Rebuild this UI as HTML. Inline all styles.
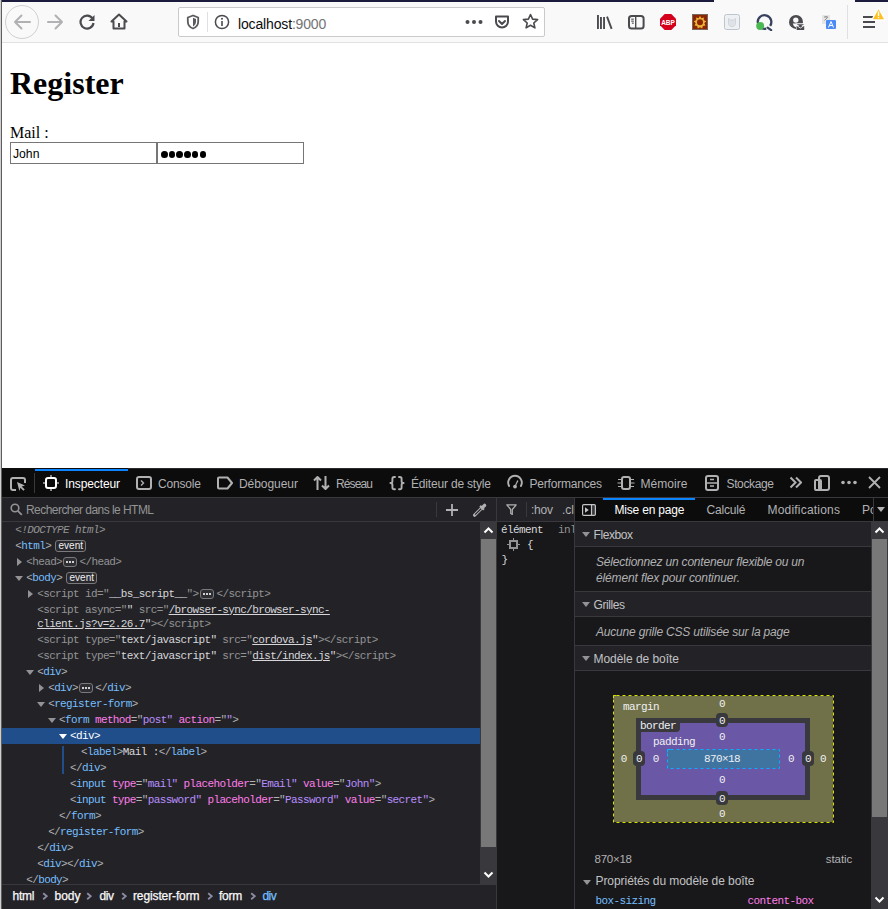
<!DOCTYPE html>
<html><head><meta charset="utf-8"><style>
html,body{margin:0;padding:0}
body{width:888px;height:909px;position:relative;overflow:hidden;background:#fff}
</style></head><body>
<div style="position:absolute;left:0px;top:0px;width:888px;height:43px;background:#f9f9fa;"></div>
<div style="position:absolute;left:0px;top:0px;width:714px;height:2px;background:#1b1c3d;"></div>
<div style="position:absolute;left:855px;top:0px;width:33px;height:2px;background:#1b1c3d;"></div>
<div style="position:absolute;left:0px;top:42px;width:888px;height:1px;background:#e1e1e3;"></div>
<div style="position:absolute;left:0px;top:0px;width:1px;height:909px;background:#cfcfcf;"></div>
<div style="position:absolute;left:1px;top:0px;width:1px;height:909px;background:#5e5e5e;"></div>
<svg style="position:absolute;left:4px;top:4px" width="36" height="36" viewBox="0 0 36 36"><circle cx="18" cy="18" r="16.5" fill="none" stroke="#d0d0d2" stroke-width="1"/><path d="M11 18h15M17.5 11.5L11 18l6.5 6.5" fill="none" stroke="#b1b1b3" stroke-width="2" stroke-linecap="round" stroke-linejoin="round"/></svg>
<svg style="position:absolute;left:46px;top:14px" width="18" height="16" viewBox="0 0 18 16"><path d="M2 8h14M9.5 1.5L16 8l-6.5 6.5" fill="none" stroke="#b1b1b3" stroke-width="2" stroke-linecap="round" stroke-linejoin="round"/></svg>
<svg style="position:absolute;left:79px;top:14px" width="17" height="16" viewBox="0 0 17 16"><path d="M13.5 4.5A6.5 6.5 0 1 0 14.5 9" fill="none" stroke="#4a4a4f" stroke-width="2.2"/><path d="M15.5 1v6h-6z" fill="#4a4a4f"/></svg>
<svg style="position:absolute;left:110px;top:13px" width="18" height="17" viewBox="0 0 18 17"><path d="M9 1.5L1.5 8.5h2v7h11v-7h2z" fill="none" stroke="#4a4a4f" stroke-width="2" stroke-linejoin="round"/><rect x="8" y="10" width="2" height="4" fill="#4a4a4f"/></svg>
<div style="position:absolute;left:178px;top:7px;width:365px;height:28px;background:#fff;border:1px solid #cacacc;border-radius:2px;"></div>
<svg style="position:absolute;left:186px;top:14px" width="14" height="16" viewBox="0 0 14 16"><path d="M7 1.5L1.8 3.5v4c0 3.5 2.3 6 5.2 7 2.9-1 5.2-3.5 5.2-7v-4z" fill="none" stroke="#5b5b5f" stroke-width="1.8"/><path d="M7 3.8v8.6c1.8-.9 3-2.6 3-4.8V5z" fill="#5b5b5f"/></svg>
<div style="position:absolute;left:207px;top:12px;width:1px;height:20px;background:#e0e0e2;"></div>
<svg style="position:absolute;left:214px;top:14px" width="16" height="16" viewBox="0 0 16 16"><circle cx="8" cy="8" r="6.6" fill="none" stroke="#4a4a4f" stroke-width="1.5"/><rect x="7.2" y="7" width="1.6" height="5" fill="#4a4a4f"/><circle cx="8" cy="4.8" r="1" fill="#4a4a4f"/></svg>
<div id="t0" style="letter-spacing:-0.155px;position:absolute;left:238px;top:16.95px;font-family:'Liberation Sans', sans-serif;font-size:14px;line-height:14px;color:#0c0c0d;white-space:pre;">localhost<span style="color:#737373">:9000</span></div>
<svg style="position:absolute;left:465px;top:19px" width="18" height="6" viewBox="0 0 18 6"><circle cx="2.5" cy="3" r="2" fill="#4a4a4f"/><circle cx="9" cy="3" r="2" fill="#4a4a4f"/><circle cx="15.5" cy="3" r="2" fill="#4a4a4f"/></svg>
<svg style="position:absolute;left:494px;top:14px" width="16" height="16" viewBox="0 0 16 16"><path d="M2 2.5h12v5a6 6 0 0 1-12 0z" fill="none" stroke="#4a4a4f" stroke-width="2" stroke-linejoin="round"/><path d="M5 7l3 3 3-3" fill="none" stroke="#4a4a4f" stroke-width="2" stroke-linecap="round" stroke-linejoin="round"/></svg>
<svg style="position:absolute;left:522px;top:13px" width="17" height="17" viewBox="0 0 17 17"><path d="M8.5 1.5l2.1 4.6 5 .5-3.8 3.4 1.1 4.9-4.4-2.6-4.4 2.6 1.1-4.9L1.4 6.6l5-.5z" fill="none" stroke="#4a4a4f" stroke-width="1.6" stroke-linejoin="round"/></svg>
<svg style="position:absolute;left:596px;top:14px" width="17" height="16" viewBox="0 0 17 16"><rect x="1" y="1" width="1.9" height="14" fill="#4a4a4f"/><rect x="4" y="3" width="1.9" height="12" fill="#4a4a4f"/><rect x="7.1" y="3" width="1.9" height="12" fill="#4a4a4f"/><path d="M11 2.6l4.6 12.2" stroke="#4a4a4f" stroke-width="1.9"/></svg>
<svg style="position:absolute;left:628px;top:14.5px" width="17" height="15" viewBox="0 0 17 15"><rect x="1" y="1" width="14.6" height="12.6" rx="2.6" fill="none" stroke="#4a4a4f" stroke-width="2"/><rect x="7" y="1" width="1.4" height="12.6" fill="#4a4a4f"/><rect x="3.2" y="3.6" width="2.6" height="1.1" fill="#4a4a4f"/><rect x="3.2" y="5.6" width="2.6" height="1.1" fill="#4a4a4f"/><rect x="3.9" y="7.6" width="1.9" height="1.1" fill="#4a4a4f"/></svg>
<svg style="position:absolute;left:660px;top:14px" width="16" height="16" viewBox="0 0 16 16"><path d="M4.7 0h6.6L16 4.7v6.6L11.3 16H4.7L0 11.3V4.7z" fill="#d4001c"/><text x="8" y="11" font-family="Liberation Sans" font-weight="bold" font-size="6.5" fill="#fff" text-anchor="middle">ABP</text></svg>
<svg style="position:absolute;left:692px;top:14px" width="16" height="16" viewBox="0 0 16 16"><rect x="0.5" y="0.5" width="15" height="15" fill="#8c2500" stroke="#77685f"/><path d="M8 1.8l1.3 2.4 2.6-.8-.2 2.7 2.5 1.1-1.9 2 1.2 2.4-2.7.4-.6 2.6L8 13.3l-2.2 1.3-.6-2.6-2.7-.4 1.2-2.4-1.9-2 2.5-1.1-.2-2.7 2.6.8z" fill="#e9b43a"/><circle cx="8" cy="8.2" r="3" fill="#8c2500"/></svg>
<svg style="position:absolute;left:724px;top:14px" width="16" height="16" viewBox="0 0 16 16"><rect x="0.5" y="0.5" width="15" height="15" rx="2" fill="#eef0f3" stroke="#bcc4cc"/><path d="M4.5 4.5l2 1.5h3l2-1.5v5c0 2-1.8 3.2-3.5 3.2S4.5 11.5 4.5 9.5z" fill="#dfe3e7" stroke="#c9cfd5" stroke-width="0.8"/></svg>
<svg style="position:absolute;left:755px;top:13px" width="19" height="18" viewBox="0 0 19 18"><path d="M11.2 15.6A6.8 6.8 0 1 1 15.1 12.9" fill="none" stroke="#38425f" stroke-width="2.3"/><path d="M12.6 14.6l3.6 2.6" stroke="#38425f" stroke-width="2.2" stroke-linecap="round"/><circle cx="5.2" cy="12.9" r="4" fill="#4cb853"/></svg>
<svg style="position:absolute;left:788px;top:14px" width="17" height="17" viewBox="0 0 17 17"><circle cx="8" cy="7.9" r="7" fill="#4a4a4f"/><circle cx="7.8" cy="6.1" r="2.7" fill="#f9f9fa"/><path d="M4.8 9.2Q6.2 9.7 8 9.2H17V17H8V13.2Q5.4 12.8 4.8 9.2z" fill="#f9f9fa"/><path d="M8.6 10.2H16.2L12.4 12.6z" fill="#4a4a4f"/><rect x="8.6" y="12" width="7.6" height="4" fill="#4a4a4f"/><path d="M8.8 11.6L12.4 14 16 11.6" fill="none" stroke="#f9f9fa" stroke-width="0.9"/></svg>
<svg style="position:absolute;left:821px;top:15px" width="15" height="14" viewBox="0 0 15 14"><rect x="1" y="0" width="8" height="9" fill="#e6e6e6"/><path d="M3 2h4M5 1v1M3.5 5.5l3-3" stroke="#777" stroke-width="0.8"/><rect x="5" y="5" width="10" height="9" rx="1" fill="#4c8bf5"/><path d="M7.5 12.5l2.5-6 2.5 6M8.5 10.5h3" fill="none" stroke="#fff" stroke-width="1"/></svg>
<div style="position:absolute;left:847px;top:5px;width:1px;height:34px;background:#e0e0e2;"></div>
<svg style="position:absolute;left:862px;top:15px" width="14" height="13" viewBox="0 0 14 13"><rect x="1" y="1" width="12" height="2" fill="#4a4a4f"/><rect x="1" y="6" width="12" height="2" fill="#4a4a4f"/><rect x="1" y="11" width="12" height="2" fill="#4a4a4f"/></svg>
<svg style="position:absolute;left:871px;top:7px" width="15" height="14" viewBox="0 0 15 14"><path d="M7.5 0.8L14.2 13H0.8z" fill="#ffbf1f" stroke="#fff" stroke-linejoin="round" stroke-width="1.4"/><rect x="6.8" y="4.5" width="1.4" height="4.5" fill="#fff"/><rect x="6.8" y="9.8" width="1.4" height="1.4" fill="#fff"/></svg>
<div id="t1" style="position:absolute;left:10px;top:67.20px;font-family:'Liberation Serif', serif;font-size:32px;line-height:32px;color:#000;white-space:pre;font-weight:bold;">Register</div>
<div id="t2" style="position:absolute;left:10px;top:124.60px;font-family:'Liberation Serif', serif;font-size:16px;line-height:16px;color:#000;white-space:pre;">Mail :</div>
<div style="position:absolute;left:10px;top:142px;width:145px;height:20px;background:#fff;border:1px solid #767676;"></div>
<div id="t3" style="position:absolute;left:13px;top:147.67px;font-family:'Liberation Sans', sans-serif;font-size:12.2px;line-height:12.2px;color:#000;white-space:pre;">John</div>
<div style="position:absolute;left:157px;top:142px;width:145px;height:20px;background:#fff;border:1px solid #767676;"></div>
<div style="position:absolute;left:161.0px;top:150.5px;width:6.6px;height:7px;border-radius:50%;background:#000"></div>
<div style="position:absolute;left:168.7px;top:150.5px;width:6.6px;height:7px;border-radius:50%;background:#000"></div>
<div style="position:absolute;left:176.4px;top:150.5px;width:6.6px;height:7px;border-radius:50%;background:#000"></div>
<div style="position:absolute;left:184.1px;top:150.5px;width:6.6px;height:7px;border-radius:50%;background:#000"></div>
<div style="position:absolute;left:191.8px;top:150.5px;width:6.6px;height:7px;border-radius:50%;background:#000"></div>
<div style="position:absolute;left:199.5px;top:150.5px;width:6.6px;height:7px;border-radius:50%;background:#000"></div>
<div style="position:absolute;left:2px;top:468px;width:886px;height:441px;background:#232327;"></div>
<div style="position:absolute;left:2px;top:468px;width:886px;height:29px;background:#0c0c0d;"></div>
<div style="position:absolute;left:2px;top:497px;width:886px;height:1px;background:#38383d;"></div>
<div style="position:absolute;left:128px;top:468px;width:760px;height:1px;background:#2a2a2e;"></div>
<div style="position:absolute;left:35px;top:469px;width:93px;height:2px;background:#0a84ff;"></div>
<svg style="position:absolute;left:10px;top:477px" width="17" height="15" viewBox="0 0 17 15"><path d="M6 13H3a2 2 0 0 1-2-2V3a2 2 0 0 1 2-2h10a2 2 0 0 1 2 2v3" fill="none" stroke="#b1b1b3" stroke-width="2"/><path d="M7 5l8 3.5-3.3 1 3 3-1.3 1.3-3-3-1 3.2z" fill="#b1b1b3"/></svg>
<div style="position:absolute;left:34px;top:473px;width:1px;height:20px;background:#38383d;"></div>
<svg style="position:absolute;left:43px;top:475px" width="16" height="16" viewBox="0 0 16 16"><rect x="3" y="3" width="10" height="10" rx="2" fill="none" stroke="#fff" stroke-width="2"/><path d="M8 0v3M8 13v3M0 8h3M13 8h3" stroke="#fff" stroke-width="1"/></svg>
<div id="t4" style="letter-spacing:-0.116px;position:absolute;left:65px;top:477.84px;font-family:'Liberation Sans', sans-serif;font-size:12px;line-height:12px;color:#fff;white-space:pre;">Inspecteur</div>
<svg style="position:absolute;left:136px;top:476px" width="16" height="14" viewBox="0 0 16 14"><rect x="1" y="1" width="14" height="12" rx="2" fill="none" stroke="#b1b1b3" stroke-width="2"/><path d="M5 4.5l2.5 2.5L5 9.5" fill="none" stroke="#b1b1b3" stroke-width="1.4"/></svg>
<div id="t5" style="letter-spacing:-0.172px;position:absolute;left:158px;top:477.84px;font-family:'Liberation Sans', sans-serif;font-size:12px;line-height:12px;color:#b1b1b3;white-space:pre;">Console</div>
<svg style="position:absolute;left:217px;top:476px" width="16" height="14" viewBox="0 0 16 14"><path d="M2 1.5h8.5L15 7l-4.5 5.5H2a1 1 0 0 1-1-1v-9a1 1 0 0 1 1-1z" fill="none" stroke="#b1b1b3" stroke-width="2" stroke-linejoin="round"/></svg>
<div id="t6" style="letter-spacing:-0.049px;position:absolute;left:239px;top:477.84px;font-family:'Liberation Sans', sans-serif;font-size:12px;line-height:12px;color:#b1b1b3;white-space:pre;">Débogueur</div>
<svg style="position:absolute;left:313px;top:475px" width="17" height="16" viewBox="0 0 17 16"><path d="M4.5 15V2M1 5.5l3.5-3.5L8 5.5M12.5 1v13M9 10.5l3.5 3.5 3.5-3.5" fill="none" stroke="#b1b1b3" stroke-width="2" stroke-linejoin="round"/></svg>
<div id="t7" style="letter-spacing:-0.875px;position:absolute;left:336px;top:477.84px;font-family:'Liberation Sans', sans-serif;font-size:12px;line-height:12px;color:#b1b1b3;white-space:pre;">Réseau</div>
<svg style="position:absolute;left:389px;top:475px" width="16" height="16" viewBox="0 0 16 16"><path d="M6 2H5.2Q3.4 2 3.4 3.8V6.2Q3.4 8 1.4 8Q3.4 8 3.4 9.8V12.4Q3.4 14.2 5.2 14.2H6M10 2H10.8Q12.6 2 12.6 3.8V6.2Q12.6 8 14.6 8Q12.6 8 12.6 9.8V12.4Q12.6 14.2 10.8 14.2H10" fill="none" stroke="#b1b1b3" stroke-width="1.9" stroke-linecap="round" stroke-linejoin="round"/></svg>
<div id="t8" style="letter-spacing:-0.181px;position:absolute;left:411px;top:477.84px;font-family:'Liberation Sans', sans-serif;font-size:12px;line-height:12px;color:#b1b1b3;white-space:pre;">Éditeur de style</div>
<svg style="position:absolute;left:507px;top:474px" width="16" height="16" viewBox="0 0 16 16"><path d="M2.1 12A6.8 6.8 0 1 1 13.9 12" fill="none" stroke="#b1b1b3" stroke-width="1.9" stroke-linecap="round"/><path d="M8 12.4L10.6 6.9" stroke="#b1b1b3" stroke-width="1.2" stroke-linecap="round"/><circle cx="8" cy="12.6" r="1.9" fill="#b1b1b3"/></svg>
<div id="t9" style="letter-spacing:-0.200px;position:absolute;left:529.5px;top:477.84px;font-family:'Liberation Sans', sans-serif;font-size:12px;line-height:12px;color:#b1b1b3;white-space:pre;">Performances</div>
<svg style="position:absolute;left:617px;top:475px" width="18" height="16" viewBox="0 0 18 16"><rect x="5" y="2" width="8" height="12" rx="2" fill="none" stroke="#b1b1b3" stroke-width="2"/><path d="M1 4.5h3.5M0.5 8h4M1 11.5h3.5M13.5 4.5h3.5M13.5 8h4M13.5 11.5h3.5" stroke="#b1b1b3" stroke-width="1.2"/></svg>
<div id="t10" style="letter-spacing:0.052px;position:absolute;left:640.5px;top:477.84px;font-family:'Liberation Sans', sans-serif;font-size:12px;line-height:12px;color:#b1b1b3;white-space:pre;">Mémoire</div>
<svg style="position:absolute;left:705px;top:475px" width="14" height="16" viewBox="0 0 14 16"><rect x="1" y="1" width="12" height="14" rx="2" fill="none" stroke="#b1b1b3" stroke-width="2"/><path d="M1 8h12M5 4.5h4M5 11h4" stroke="#b1b1b3" stroke-width="1.5"/></svg>
<div id="t11" style="letter-spacing:-0.364px;position:absolute;left:726.5px;top:477.84px;font-family:'Liberation Sans', sans-serif;font-size:12px;line-height:12px;color:#b1b1b3;white-space:pre;">Stockage</div>
<svg style="position:absolute;left:789px;top:476px" width="13" height="13" viewBox="0 0 13 13"><path d="M1.5 1.5l5 5-5 5M7 1.5l5 5-5 5" fill="none" stroke="#b1b1b3" stroke-width="2"/></svg>
<svg style="position:absolute;left:814px;top:475px" width="16" height="16" viewBox="0 0 16 16"><rect x="5" y="1" width="10" height="14" rx="2" fill="none" stroke="#b1b1b3" stroke-width="2"/><rect x="1" y="5" width="6" height="10" rx="1" fill="none" stroke="#b1b1b3" stroke-width="2"/></svg>
<svg style="position:absolute;left:841px;top:480px" width="16" height="5" viewBox="0 0 16 5"><circle cx="2" cy="2.5" r="1.8" fill="#b1b1b3"/><circle cx="8" cy="2.5" r="1.8" fill="#b1b1b3"/><circle cx="14" cy="2.5" r="1.8" fill="#b1b1b3"/></svg>
<svg style="position:absolute;left:868px;top:476px" width="13" height="13" viewBox="0 0 13 13"><path d="M1 1l11 11M12 1L1 12" stroke="#b1b1b3" stroke-width="1.8"/></svg>
<div style="position:absolute;left:2px;top:498px;width:494px;height:23px;background:#232327;"></div>
<div style="position:absolute;left:2px;top:521px;width:494px;height:1px;background:#38383d;"></div>
<svg style="position:absolute;left:10px;top:503px" width="13" height="13" viewBox="0 0 13 13"><circle cx="5" cy="5" r="3.8" fill="none" stroke="#939395" stroke-width="1.6"/><path d="M7.8 7.8l4 4" stroke="#939395" stroke-width="1.8"/></svg>
<div id="t12" style="letter-spacing:-0.548px;position:absolute;left:26px;top:503.84px;font-family:'Liberation Sans', sans-serif;font-size:12px;line-height:12px;color:#939395;white-space:pre;">Rechercher dans le HTML</div>
<div style="position:absolute;left:436px;top:502px;width:1px;height:15px;background:#38383d;"></div>
<svg style="position:absolute;left:446px;top:504px" width="12" height="12" viewBox="0 0 12 12"><path d="M6 0v12M0 6h12" stroke="#b1b1b3" stroke-width="1.8"/></svg>
<svg style="position:absolute;left:472px;top:501px" width="16" height="16" viewBox="0 0 16 16"><path d="M2.6 14.2L9.6 7.2" stroke="#b1b1b3" stroke-width="3.2" stroke-linecap="round"/><path d="M3.1 13.7L9.3 7.5" stroke="#232327" stroke-width="1.1"/><path d="M8.1 4.9L11.9 8.7" stroke="#b1b1b3" stroke-width="2.2"/><path d="M10.6 6.4l2-2" stroke="#b1b1b3" stroke-width="3.4" stroke-linecap="round"/></svg>
<div style="position:absolute;left:480px;top:522px;width:16px;height:362px;background:#38383d;"></div>
<div style="position:absolute;left:481px;top:539px;width:15px;height:308px;background:#787878;"></div>
<svg style="position:absolute;left:483px;top:526px" width="11" height="8" viewBox="0 0 11 8"><path d="M1.5 6.5l4-4 4 4" fill="none" stroke="#fff" stroke-width="2"/></svg>
<svg style="position:absolute;left:483px;top:871px" width="11" height="8" viewBox="0 0 11 8"><path d="M1.5 1.5l4 4 4-4" fill="none" stroke="#fff" stroke-width="2"/></svg>
<div style="position:absolute;left:2px;top:884px;width:494px;height:1px;background:#38383d;"></div>
<div style="position:absolute;left:2px;top:885px;width:494px;height:24px;background:#232327;"></div>
<div id="t13" style="letter-spacing:-0.224px;position:absolute;left:12.5px;top:889.84px;font-family:'Liberation Sans', sans-serif;font-size:12px;line-height:12px;color:#f9f9fa;white-space:pre;-webkit-text-stroke:0.25px currentColor;">html</div>
<svg style="position:absolute;left:41.5px;top:891.5px" width="6" height="9" viewBox="0 0 6 9"><path d="M1.2 1.2l3.6 3-3.6 3" fill="none" stroke="#8d8ca6" stroke-width="1.8"/></svg>
<div id="t14" style="letter-spacing:-0.010px;position:absolute;left:54.5px;top:889.84px;font-family:'Liberation Sans', sans-serif;font-size:12px;line-height:12px;color:#f9f9fa;white-space:pre;-webkit-text-stroke:0.25px currentColor;">body</div>
<svg style="position:absolute;left:86px;top:891.5px" width="6" height="9" viewBox="0 0 6 9"><path d="M1.2 1.2l3.6 3-3.6 3" fill="none" stroke="#8d8ca6" stroke-width="1.8"/></svg>
<div id="t15" style="letter-spacing:-0.422px;position:absolute;left:99.5px;top:889.84px;font-family:'Liberation Sans', sans-serif;font-size:12px;line-height:12px;color:#f9f9fa;white-space:pre;-webkit-text-stroke:0.25px currentColor;">div</div>
<svg style="position:absolute;left:120.5px;top:891.5px" width="6" height="9" viewBox="0 0 6 9"><path d="M1.2 1.2l3.6 3-3.6 3" fill="none" stroke="#8d8ca6" stroke-width="1.8"/></svg>
<div id="t16" style="letter-spacing:-0.126px;position:absolute;left:133px;top:889.84px;font-family:'Liberation Sans', sans-serif;font-size:12px;line-height:12px;color:#f9f9fa;white-space:pre;-webkit-text-stroke:0.25px currentColor;">register-form</div>
<svg style="position:absolute;left:206.5px;top:891.5px" width="6" height="9" viewBox="0 0 6 9"><path d="M1.2 1.2l3.6 3-3.6 3" fill="none" stroke="#8d8ca6" stroke-width="1.8"/></svg>
<div id="t17" style="letter-spacing:-0.233px;position:absolute;left:219px;top:889.84px;font-family:'Liberation Sans', sans-serif;font-size:12px;line-height:12px;color:#f9f9fa;white-space:pre;-webkit-text-stroke:0.25px currentColor;">form</div>
<svg style="position:absolute;left:249.5px;top:891.5px" width="6" height="9" viewBox="0 0 6 9"><path d="M1.2 1.2l3.6 3-3.6 3" fill="none" stroke="#8d8ca6" stroke-width="1.8"/></svg>
<div id="t18" style="letter-spacing:-0.572px;position:absolute;left:262.5px;top:889.84px;font-family:'Liberation Sans', sans-serif;font-size:12px;line-height:12px;color:#75bfff;white-space:pre;-webkit-text-stroke:0.25px currentColor;">div</div>
<div style="position:absolute;left:2px;top:728px;width:478px;height:16px;background:#204e8a;"></div>
<div id="t19" style="position:absolute;left:15.3px;top:524.57px;font-family:'Liberation Mono', monospace;font-size:11px;line-height:11px;color:#b1b1b3;white-space:pre;letter-spacing:-0.63px;font-style:italic;"><span style="color:#939395;">&lt;!DOCTYPE html&gt;</span></div>
<div id="t20" style="position:absolute;left:15.3px;top:540.57px;font-family:'Liberation Mono', monospace;font-size:11px;line-height:11px;color:#b1b1b3;white-space:pre;letter-spacing:-0.63px;"><span style="color:#b1b1b3;">&lt;</span><span style="color:#75bfff;">html</span><span style="color:#b1b1b3;">&gt;</span></div>
<div style="position:absolute;left:55px;top:540px;width:29px;height:10px;border:1px solid #7a7a7c;border-radius:3px;background:#2a2a2e"></div>
<div id="t21" style="letter-spacing:0.008px;position:absolute;left:58.5px;top:540.53px;font-family:'Liberation Sans', sans-serif;font-size:10px;line-height:10px;color:#f0f0f2;white-space:pre;">event</div>
<svg style="position:absolute;left:16.75px;top:558px" width="5" height="8" viewBox="0 0 5 8"><path d="M0 0v8l5-4z" fill="#939395"/></svg>
<div id="t22" style="position:absolute;left:26.25px;top:556.57px;font-family:'Liberation Mono', monospace;font-size:11px;line-height:11px;color:#b1b1b3;white-space:pre;letter-spacing:-0.63px;"><span style="color:#939395;">&lt;head&gt;</span></div>
<svg style="position:absolute;left:63px;top:557px" width="14" height="10" viewBox="0 0 14 10"><rect x="0.5" y="0.5" width="13" height="9" rx="2.5" fill="#2e2e33" stroke="#7a7a7c"/><rect x="3" y="4" width="2" height="2" fill="#d0d0d2"/><rect x="6" y="4" width="2" height="2" fill="#d0d0d2"/><rect x="9" y="4" width="2" height="2" fill="#d0d0d2"/></svg>
<div id="t23" style="position:absolute;left:79.5px;top:556.57px;font-family:'Liberation Mono', monospace;font-size:11px;line-height:11px;color:#939395;white-space:pre;letter-spacing:-0.63px;"><span style="color:#939395;">&lt;/head&gt;</span></div>
<svg style="position:absolute;left:15.25px;top:575.5px" width="8" height="5" viewBox="0 0 8 5"><path d="M0 0h8L4 5z" fill="#939395"/></svg>
<div id="t24" style="position:absolute;left:26.25px;top:572.57px;font-family:'Liberation Mono', monospace;font-size:11px;line-height:11px;color:#b1b1b3;white-space:pre;letter-spacing:-0.63px;"><span style="color:#b1b1b3;">&lt;</span><span style="color:#75bfff;">body</span><span style="color:#b1b1b3;">&gt;</span></div>
<div style="position:absolute;left:66px;top:572px;width:29px;height:10px;border:1px solid #7a7a7c;border-radius:3px;background:#2a2a2e"></div>
<div id="t25" style="letter-spacing:0.008px;position:absolute;left:69.5px;top:572.53px;font-family:'Liberation Sans', sans-serif;font-size:10px;line-height:10px;color:#f0f0f2;white-space:pre;">event</div>
<svg style="position:absolute;left:27.700000000000003px;top:590px" width="5" height="8" viewBox="0 0 5 8"><path d="M0 0v8l5-4z" fill="#939395"/></svg>
<div id="t26" style="position:absolute;left:37.2px;top:588.57px;font-family:'Liberation Mono', monospace;font-size:11px;line-height:11px;color:#b1b1b3;white-space:pre;letter-spacing:-0.63px;"><span style="color:#939395;">&lt;script </span><span style="color:#939395;">id</span><span style="color:#939395;">=&quot;</span><span style="color:#d7d7db;">__bs_script__</span><span style="color:#939395;">&quot;&gt;</span></div>
<svg style="position:absolute;left:200px;top:589px" width="14" height="10" viewBox="0 0 14 10"><rect x="0.5" y="0.5" width="13" height="9" rx="2.5" fill="#2e2e33" stroke="#7a7a7c"/><rect x="3" y="4" width="2" height="2" fill="#d0d0d2"/><rect x="6" y="4" width="2" height="2" fill="#d0d0d2"/><rect x="9" y="4" width="2" height="2" fill="#d0d0d2"/></svg>
<div id="t27" style="position:absolute;left:216.5px;top:588.57px;font-family:'Liberation Mono', monospace;font-size:11px;line-height:11px;color:#939395;white-space:pre;letter-spacing:-0.63px;"><span style="color:#939395;">&lt;/script&gt;</span></div>
<div id="t28" style="position:absolute;left:37.2px;top:604.57px;font-family:'Liberation Mono', monospace;font-size:11px;line-height:11px;color:#b1b1b3;white-space:pre;letter-spacing:-0.63px;"><span style="color:#939395;">&lt;script </span><span style="color:#939395;">async</span><span style="color:#939395;">=&quot;</span><span style="color:#d7d7db;">&quot;</span><span style="color:#939395;"> </span><span style="color:#939395;">src</span><span style="color:#939395;">=&quot;</span><span style="color:#d7d7db;text-decoration:underline;">/browser-sync/browser-sync-</span></div>
<div id="t29" style="position:absolute;left:37.2px;top:618.57px;font-family:'Liberation Mono', monospace;font-size:11px;line-height:11px;color:#b1b1b3;white-space:pre;letter-spacing:-0.63px;"><span style="color:#d7d7db;text-decoration:underline;">client.js?v=2.26.7</span><span style="color:#d7d7db;">&quot;</span><span style="color:#939395;">&gt;&lt;/script&gt;</span></div>
<div id="t30" style="position:absolute;left:37.2px;top:634.57px;font-family:'Liberation Mono', monospace;font-size:11px;line-height:11px;color:#b1b1b3;white-space:pre;letter-spacing:-0.63px;"><span style="color:#939395;">&lt;script </span><span style="color:#939395;">type</span><span style="color:#939395;">=&quot;</span><span style="color:#d7d7db;">text/javascript&quot;</span><span style="color:#939395;"> </span><span style="color:#939395;">src</span><span style="color:#939395;">=&quot;</span><span style="color:#d7d7db;text-decoration:underline;">cordova.js</span><span style="color:#d7d7db;">&quot;</span><span style="color:#939395;">&gt;&lt;/script&gt;</span></div>
<div id="t31" style="position:absolute;left:37.2px;top:650.57px;font-family:'Liberation Mono', monospace;font-size:11px;line-height:11px;color:#b1b1b3;white-space:pre;letter-spacing:-0.63px;"><span style="color:#939395;">&lt;script </span><span style="color:#939395;">type</span><span style="color:#939395;">=&quot;</span><span style="color:#d7d7db;">text/javascript&quot;</span><span style="color:#939395;"> </span><span style="color:#939395;">src</span><span style="color:#939395;">=&quot;</span><span style="color:#d7d7db;text-decoration:underline;">dist/index.js</span><span style="color:#d7d7db;">&quot;</span><span style="color:#939395;">&gt;&lt;/script&gt;</span></div>
<svg style="position:absolute;left:26.200000000000003px;top:669.5px" width="8" height="5" viewBox="0 0 8 5"><path d="M0 0h8L4 5z" fill="#939395"/></svg>
<div id="t32" style="position:absolute;left:37.2px;top:666.57px;font-family:'Liberation Mono', monospace;font-size:11px;line-height:11px;color:#b1b1b3;white-space:pre;letter-spacing:-0.63px;"><span style="color:#b1b1b3;">&lt;</span><span style="color:#75bfff;">div</span><span style="color:#b1b1b3;">&gt;</span></div>
<svg style="position:absolute;left:38.64999999999999px;top:684px" width="5" height="8" viewBox="0 0 5 8"><path d="M0 0v8l5-4z" fill="#939395"/></svg>
<div id="t33" style="position:absolute;left:48.14999999999999px;top:682.57px;font-family:'Liberation Mono', monospace;font-size:11px;line-height:11px;color:#b1b1b3;white-space:pre;letter-spacing:-0.63px;"><span style="color:#b1b1b3;">&lt;</span><span style="color:#75bfff;">div</span><span style="color:#b1b1b3;">&gt;</span></div>
<svg style="position:absolute;left:79px;top:683px" width="14" height="10" viewBox="0 0 14 10"><rect x="0.5" y="0.5" width="13" height="9" rx="2.5" fill="#2e2e33" stroke="#7a7a7c"/><rect x="3" y="4" width="2" height="2" fill="#d0d0d2"/><rect x="6" y="4" width="2" height="2" fill="#d0d0d2"/><rect x="9" y="4" width="2" height="2" fill="#d0d0d2"/></svg>
<div id="t34" style="position:absolute;left:95.2px;top:682.57px;font-family:'Liberation Mono', monospace;font-size:11px;line-height:11px;color:#b1b1b3;white-space:pre;letter-spacing:-0.63px;"><span style="color:#b1b1b3;">&lt;/</span><span style="color:#75bfff;">div</span><span style="color:#b1b1b3;">&gt;</span></div>
<svg style="position:absolute;left:37.14999999999999px;top:701.5px" width="8" height="5" viewBox="0 0 8 5"><path d="M0 0h8L4 5z" fill="#939395"/></svg>
<div id="t35" style="position:absolute;left:48.14999999999999px;top:698.57px;font-family:'Liberation Mono', monospace;font-size:11px;line-height:11px;color:#b1b1b3;white-space:pre;letter-spacing:-0.63px;"><span style="color:#b1b1b3;">&lt;</span><span style="color:#75bfff;">register-form</span><span style="color:#b1b1b3;">&gt;</span></div>
<svg style="position:absolute;left:48.099999999999994px;top:717.5px" width="8" height="5" viewBox="0 0 8 5"><path d="M0 0h8L4 5z" fill="#939395"/></svg>
<div id="t36" style="position:absolute;left:59.099999999999994px;top:714.57px;font-family:'Liberation Mono', monospace;font-size:11px;line-height:11px;color:#b1b1b3;white-space:pre;letter-spacing:-0.63px;"><span style="color:#b1b1b3;">&lt;</span><span style="color:#75bfff;">form</span><span style="color:#b1b1b3;"> </span><span style="color:#ff7de9;">method</span><span style="color:#b1b1b3;">=&quot;</span><span style="color:#b98eff;">post&quot;</span><span style="color:#b1b1b3;"> </span><span style="color:#ff7de9;">action</span><span style="color:#b1b1b3;">=&quot;</span><span style="color:#b98eff;">&quot;</span><span style="color:#b1b1b3;">&gt;</span></div>
<svg style="position:absolute;left:59.05px;top:733.5px" width="8" height="5" viewBox="0 0 8 5"><path d="M0 0h8L4 5z" fill="#fff"/></svg>
<div id="t37" style="position:absolute;left:70.05px;top:730.57px;font-family:'Liberation Mono', monospace;font-size:11px;line-height:11px;color:#b1b1b3;white-space:pre;letter-spacing:-0.63px;"><span style="color:#fff;">&lt;div&gt;</span></div>
<div style="position:absolute;left:62px;top:746px;width:2px;height:28px;background:#204e8a;"></div>
<div id="t38" style="position:absolute;left:80.99999999999999px;top:746.57px;font-family:'Liberation Mono', monospace;font-size:11px;line-height:11px;color:#b1b1b3;white-space:pre;letter-spacing:-0.63px;"><span style="color:#b1b1b3;">&lt;</span><span style="color:#75bfff;">label</span><span style="color:#b1b1b3;">&gt;</span><span style="color:#d7d7db;">Mail :</span><span style="color:#b1b1b3;">&lt;/</span><span style="color:#75bfff;">label</span><span style="color:#b1b1b3;">&gt;</span></div>
<div id="t39" style="position:absolute;left:70.05px;top:762.57px;font-family:'Liberation Mono', monospace;font-size:11px;line-height:11px;color:#b1b1b3;white-space:pre;letter-spacing:-0.63px;"><span style="color:#b1b1b3;">&lt;/</span><span style="color:#75bfff;">div</span><span style="color:#b1b1b3;">&gt;</span></div>
<div id="t40" style="position:absolute;left:70.05px;top:778.57px;font-family:'Liberation Mono', monospace;font-size:11px;line-height:11px;color:#b1b1b3;white-space:pre;letter-spacing:-0.63px;"><span style="color:#b1b1b3;">&lt;</span><span style="color:#75bfff;">input</span><span style="color:#b1b1b3;"> </span><span style="color:#ff7de9;">type</span><span style="color:#b1b1b3;">=&quot;</span><span style="color:#b98eff;">mail&quot;</span><span style="color:#b1b1b3;"> </span><span style="color:#ff7de9;">placeholder</span><span style="color:#b1b1b3;">=&quot;</span><span style="color:#b98eff;">Email&quot;</span><span style="color:#b1b1b3;"> </span><span style="color:#ff7de9;">value</span><span style="color:#b1b1b3;">=&quot;</span><span style="color:#b98eff;">John&quot;</span><span style="color:#b1b1b3;">&gt;</span></div>
<div id="t41" style="position:absolute;left:70.05px;top:794.57px;font-family:'Liberation Mono', monospace;font-size:11px;line-height:11px;color:#b1b1b3;white-space:pre;letter-spacing:-0.63px;"><span style="color:#b1b1b3;">&lt;</span><span style="color:#75bfff;">input</span><span style="color:#b1b1b3;"> </span><span style="color:#ff7de9;">type</span><span style="color:#b1b1b3;">=&quot;</span><span style="color:#b98eff;">password&quot;</span><span style="color:#b1b1b3;"> </span><span style="color:#ff7de9;">placeholder</span><span style="color:#b1b1b3;">=&quot;</span><span style="color:#b98eff;">Password&quot;</span><span style="color:#b1b1b3;"> </span><span style="color:#ff7de9;">value</span><span style="color:#b1b1b3;">=&quot;</span><span style="color:#b98eff;">secret&quot;</span><span style="color:#b1b1b3;">&gt;</span></div>
<div id="t42" style="position:absolute;left:59.099999999999994px;top:810.57px;font-family:'Liberation Mono', monospace;font-size:11px;line-height:11px;color:#b1b1b3;white-space:pre;letter-spacing:-0.63px;"><span style="color:#b1b1b3;">&lt;/</span><span style="color:#75bfff;">form</span><span style="color:#b1b1b3;">&gt;</span></div>
<div id="t43" style="position:absolute;left:48.14999999999999px;top:826.57px;font-family:'Liberation Mono', monospace;font-size:11px;line-height:11px;color:#b1b1b3;white-space:pre;letter-spacing:-0.63px;"><span style="color:#b1b1b3;">&lt;/</span><span style="color:#75bfff;">register-form</span><span style="color:#b1b1b3;">&gt;</span></div>
<div id="t44" style="position:absolute;left:37.2px;top:842.57px;font-family:'Liberation Mono', monospace;font-size:11px;line-height:11px;color:#b1b1b3;white-space:pre;letter-spacing:-0.63px;"><span style="color:#b1b1b3;">&lt;/</span><span style="color:#75bfff;">div</span><span style="color:#b1b1b3;">&gt;</span></div>
<div id="t45" style="position:absolute;left:37.2px;top:858.57px;font-family:'Liberation Mono', monospace;font-size:11px;line-height:11px;color:#b1b1b3;white-space:pre;letter-spacing:-0.63px;"><span style="color:#b1b1b3;">&lt;</span><span style="color:#75bfff;">div</span><span style="color:#b1b1b3;">&gt;&lt;/</span><span style="color:#75bfff;">div</span><span style="color:#b1b1b3;">&gt;</span></div>
<div id="t46" style="position:absolute;left:26.25px;top:874.57px;font-family:'Liberation Mono', monospace;font-size:11px;line-height:11px;color:#b1b1b3;white-space:pre;letter-spacing:-0.63px;"><span style="color:#b1b1b3;">&lt;/</span><span style="color:#75bfff;">body</span><span style="color:#b1b1b3;">&gt;</span></div>
<div style="position:absolute;left:496px;top:497px;width:1px;height:412px;background:#38383d;"></div>
<div style="position:absolute;left:497px;top:498px;width:77px;height:23px;background:#232327;"></div>
<div style="position:absolute;left:497px;top:521px;width:77px;height:1px;background:#38383d;"></div>
<div style="position:absolute;left:497px;top:522px;width:77px;height:387px;background:#18181a;"></div>
<svg style="position:absolute;left:506px;top:504px" width="11" height="11" viewBox="0 0 11 11"><path d="M0.8 0.8h9.4L6.3 5.5v5L4.7 9.5v-4z" fill="none" stroke="#b1b1b3" stroke-width="1.2" stroke-linejoin="round"/></svg>
<div style="position:absolute;left:526px;top:502px;width:1px;height:15px;background:#38383d;"></div>
<div id="t47" style="letter-spacing:-0.229px;position:absolute;left:531px;top:503.84px;font-family:'Liberation Sans', sans-serif;font-size:12px;line-height:12px;color:#b1b1b3;white-space:pre;">:hov</div>
<div id="t48" style="position:absolute;left:562px;top:503.84px;font-family:'Liberation Sans', sans-serif;font-size:12px;line-height:12px;color:#b1b1b3;white-space:pre;">.cls</div>
<div id="t49" style="position:absolute;left:501px;top:525.07px;font-family:'Liberation Mono', monospace;font-size:11px;line-height:11px;color:#d7d7db;white-space:pre;letter-spacing:-0.6px;">élément</div>
<div id="t50" style="position:absolute;left:558px;top:525.07px;font-family:'Liberation Mono', monospace;font-size:11px;line-height:11px;color:#939395;white-space:pre;letter-spacing:-0.6px;">inline</div>
<svg style="position:absolute;left:507px;top:538px" width="13" height="13" viewBox="0 0 13 13"><rect x="3" y="3" width="7" height="7" fill="none" stroke="#939395" stroke-width="2"/><path d="M6.5 0v3M6.5 10v3M0 6.5h3M10 6.5h3" stroke="#939395" stroke-width="1"/></svg>
<div id="t51" style="position:absolute;left:527px;top:540.07px;font-family:'Liberation Mono', monospace;font-size:11px;line-height:11px;color:#d7d7db;white-space:pre;">{</div>
<div id="t52" style="position:absolute;left:501.5px;top:555.07px;font-family:'Liberation Mono', monospace;font-size:11px;line-height:11px;color:#d7d7db;white-space:pre;">}</div>
<div style="position:absolute;left:574px;top:497px;width:1px;height:412px;background:#38383d;"></div>
<div style="position:absolute;left:575px;top:498px;width:313px;height:23px;background:#0c0c0d;"></div>
<div style="position:absolute;left:575px;top:521px;width:313px;height:1px;background:#38383d;"></div>
<svg style="position:absolute;left:582px;top:504px" width="14" height="12" viewBox="0 0 14 12"><rect x="10" y="1" width="3" height="10" fill="#3a3a3c"/><rect x="0.6" y="0.6" width="12.8" height="10.8" rx="1.2" fill="none" stroke="#c4c4c6" stroke-width="1.2"/><path d="M9.5 0.6v10.8" stroke="#c4c4c6" stroke-width="1.2"/><path d="M3 3.3L6.8 6 3 8.7z" fill="#c4c4c6"/></svg>
<div style="position:absolute;left:603px;top:498px;width:92px;height:2px;background:#0a84ff;"></div>
<div id="t53" style="letter-spacing:-0.186px;position:absolute;left:614.5px;top:503.84px;font-family:'Liberation Sans', sans-serif;font-size:12px;line-height:12px;color:#fff;white-space:pre;">Mise en page</div>
<div id="t54" style="letter-spacing:-0.172px;position:absolute;left:706.5px;top:503.84px;font-family:'Liberation Sans', sans-serif;font-size:12px;line-height:12px;color:#b1b1b3;white-space:pre;">Calculé</div>
<div id="t55" style="letter-spacing:0.206px;position:absolute;left:767.5px;top:503.84px;font-family:'Liberation Sans', sans-serif;font-size:12px;line-height:12px;color:#b1b1b3;white-space:pre;">Modifications</div>
<div id="t56" style="position:absolute;left:862px;top:503.84px;font-family:'Liberation Sans', sans-serif;font-size:12px;line-height:12px;color:#b1b1b3;white-space:pre;width:11px;overflow:hidden;">Po</div>
<div style="position:absolute;left:873px;top:498px;width:1px;height:23px;background:#38383d;"></div>
<div style="position:absolute;left:874px;top:498px;width:14px;height:23px;background:#0c0c0d;"></div>
<svg style="position:absolute;left:877px;top:507px" width="8" height="5" viewBox="0 0 8 5"><path d="M0 0h8L4 5z" fill="#b1b1b3"/></svg>
<div style="position:absolute;left:575px;top:522px;width:296px;height:387px;background:#18181a;"></div>
<div style="position:absolute;left:575px;top:522px;width:296px;height:24px;background:#232327;"></div>
<div style="position:absolute;left:575px;top:546px;width:296px;height:1px;background:#38383d;"></div>
<svg style="position:absolute;left:582px;top:532px" width="8" height="5" viewBox="0 0 8 5"><path d="M0 0h8L4 5z" fill="#939395"/></svg>
<div id="t57" style="letter-spacing:-0.422px;position:absolute;left:593.5px;top:528.64px;font-family:'Liberation Sans', sans-serif;font-size:12px;line-height:12px;color:#c2c2c4;white-space:pre;">Flexbox</div>
<div style="position:absolute;left:575px;top:521px;width:296px;height:1px;background:#38383d;"></div>
<div id="t58" style="letter-spacing:-0.196px;position:absolute;left:596px;top:555.84px;font-family:'Liberation Sans', sans-serif;font-size:12px;line-height:12px;color:#b1b1b3;white-space:pre;font-style:italic;">Sélectionnez un conteneur flexible ou un</div>
<div id="t59" style="letter-spacing:-0.135px;position:absolute;left:596px;top:571.84px;font-family:'Liberation Sans', sans-serif;font-size:12px;line-height:12px;color:#b1b1b3;white-space:pre;font-style:italic;">élément flex pour continuer.</div>
<div style="position:absolute;left:575px;top:591px;width:296px;height:1px;background:#38383d;"></div>
<div style="position:absolute;left:575px;top:592px;width:296px;height:24px;background:#232327;"></div>
<div style="position:absolute;left:575px;top:616px;width:296px;height:1px;background:#38383d;"></div>
<svg style="position:absolute;left:582px;top:602px" width="8" height="5" viewBox="0 0 8 5"><path d="M0 0h8L4 5z" fill="#939395"/></svg>
<div id="t60" style="letter-spacing:-0.419px;position:absolute;left:593.5px;top:598.64px;font-family:'Liberation Sans', sans-serif;font-size:12px;line-height:12px;color:#c2c2c4;white-space:pre;">Grilles</div>
<div id="t61" style="letter-spacing:-0.191px;position:absolute;left:596px;top:625.84px;font-family:'Liberation Sans', sans-serif;font-size:12px;line-height:12px;color:#b1b1b3;white-space:pre;font-style:italic;">Aucune grille CSS utilisée sur la page</div>
<div style="position:absolute;left:575px;top:645px;width:296px;height:1px;background:#38383d;"></div>
<div style="position:absolute;left:575px;top:646px;width:296px;height:24px;background:#232327;"></div>
<div style="position:absolute;left:575px;top:670px;width:296px;height:1px;background:#38383d;"></div>
<svg style="position:absolute;left:582px;top:656px" width="8" height="5" viewBox="0 0 8 5"><path d="M0 0h8L4 5z" fill="#939395"/></svg>
<div id="t62" style="letter-spacing:-0.040px;position:absolute;left:593.5px;top:652.64px;font-family:'Liberation Sans', sans-serif;font-size:12px;line-height:12px;color:#c2c2c4;white-space:pre;">Modèle de boîte</div>
<svg style="position:absolute;left:613px;top:695px" width="221" height="128" viewBox="0 0 221 128"><rect x="1" y="1" width="219" height="126" fill="#707049"/><path d="M0.5 3.5V0.5H3.5" fill="none" stroke="#d8e000"/><rect x="0.5" y="0.5" width="220" height="127" fill="none" stroke="#d8e000" stroke-dasharray="3 3" stroke-dashoffset="-3"/></svg>
<div style="position:absolute;left:636px;top:718px;width:164px;height:72px;border:5px solid #38383d;background:#6a57a5"></div>
<div style="position:absolute;left:636px;top:718px;width:44px;height:14px;background:#38383d;border-bottom-right-radius:4px;"></div>
<svg style="position:absolute;left:667px;top:749px" width="113" height="20" viewBox="0 0 113 20"><rect x="1" y="1" width="111" height="18" fill="#3f74a0"/><rect x="0.5" y="0.5" width="112" height="19" fill="none" stroke="#00b4ff" stroke-dasharray="3 3" stroke-dashoffset="-3"/><path d="M0.5 3.5V0.5H3.5" fill="none" stroke="#00b4ff"/></svg>
<div id="t63" style="position:absolute;left:623px;top:702.07px;font-family:'Liberation Mono', monospace;font-size:11px;line-height:11px;color:#f0f0f2;white-space:pre;letter-spacing:-0.6px;">margin</div>
<div id="t64" style="position:absolute;left:640px;top:721.07px;font-family:'Liberation Mono', monospace;font-size:11px;line-height:11px;color:#f0f0f2;white-space:pre;letter-spacing:-0.6px;">border</div>
<div id="t65" style="position:absolute;left:653px;top:737.07px;font-family:'Liberation Mono', monospace;font-size:11px;line-height:11px;color:#f0f0f2;white-space:pre;letter-spacing:-0.6px;">padding</div>
<div id="t66" style="position:absolute;left:704px;top:753.57px;font-family:'Liberation Mono', monospace;font-size:11px;line-height:11px;color:#f0f0f2;white-space:pre;letter-spacing:-0.6px;">870×18</div>
<div id="t67" style="position:absolute;left:719px;top:698.57px;font-family:'Liberation Mono', monospace;font-size:11px;line-height:11px;color:#f0f0f2;white-space:pre;letter-spacing:-0.6px;">0</div>
<div id="t68" style="position:absolute;left:719px;top:809.07px;font-family:'Liberation Mono', monospace;font-size:11px;line-height:11px;color:#f0f0f2;white-space:pre;letter-spacing:-0.6px;">0</div>
<div id="t69" style="position:absolute;left:620.7px;top:753.57px;font-family:'Liberation Mono', monospace;font-size:11px;line-height:11px;color:#f0f0f2;white-space:pre;letter-spacing:-0.6px;">0</div>
<div id="t70" style="position:absolute;left:820px;top:753.57px;font-family:'Liberation Mono', monospace;font-size:11px;line-height:11px;color:#f0f0f2;white-space:pre;letter-spacing:-0.6px;">0</div>
<div style="position:absolute;left:716px;top:713px;width:12px;height:14px;background:#38383d;border-radius:4px;"></div>
<div style="position:absolute;left:716px;top:791px;width:12px;height:14px;background:#38383d;border-radius:4px;"></div>
<div style="position:absolute;left:633px;top:751px;width:12px;height:15px;background:#38383d;border-radius:4px;"></div>
<div style="position:absolute;left:802px;top:751px;width:12px;height:15px;background:#38383d;border-radius:4px;"></div>
<div id="t71" style="position:absolute;left:719px;top:716.07px;font-family:'Liberation Mono', monospace;font-size:11px;line-height:11px;color:#f0f0f2;white-space:pre;letter-spacing:-0.6px;">0</div>
<div id="t72" style="position:absolute;left:719px;top:794.07px;font-family:'Liberation Mono', monospace;font-size:11px;line-height:11px;color:#f0f0f2;white-space:pre;letter-spacing:-0.6px;">0</div>
<div id="t73" style="position:absolute;left:636px;top:753.57px;font-family:'Liberation Mono', monospace;font-size:11px;line-height:11px;color:#f0f0f2;white-space:pre;letter-spacing:-0.6px;">0</div>
<div id="t74" style="position:absolute;left:805px;top:753.57px;font-family:'Liberation Mono', monospace;font-size:11px;line-height:11px;color:#f0f0f2;white-space:pre;letter-spacing:-0.6px;">0</div>
<div id="t75" style="position:absolute;left:719px;top:732.07px;font-family:'Liberation Mono', monospace;font-size:11px;line-height:11px;color:#f0f0f2;white-space:pre;letter-spacing:-0.6px;">0</div>
<div id="t76" style="position:absolute;left:719px;top:775.07px;font-family:'Liberation Mono', monospace;font-size:11px;line-height:11px;color:#f0f0f2;white-space:pre;letter-spacing:-0.6px;">0</div>
<div id="t77" style="position:absolute;left:652.7px;top:753.57px;font-family:'Liberation Mono', monospace;font-size:11px;line-height:11px;color:#f0f0f2;white-space:pre;letter-spacing:-0.6px;">0</div>
<div id="t78" style="position:absolute;left:788px;top:753.57px;font-family:'Liberation Mono', monospace;font-size:11px;line-height:11px;color:#f0f0f2;white-space:pre;letter-spacing:-0.6px;">0</div>
<div id="t79" style="letter-spacing:-0.241px;position:absolute;left:594.5px;top:854.07px;font-family:'Liberation Sans', sans-serif;font-size:11.5px;line-height:11.5px;color:#b1b1b3;white-space:pre;">870×18</div>
<div id="t80" style="letter-spacing:-0.069px;position:absolute;left:825.8px;top:854.07px;font-family:'Liberation Sans', sans-serif;font-size:11.5px;line-height:11.5px;color:#b1b1b3;white-space:pre;">static</div>
<svg style="position:absolute;left:583px;top:880px" width="8" height="5" viewBox="0 0 8 5"><path d="M0 0h8L4 5z" fill="#939395"/></svg>
<div id="t81" style="letter-spacing:-0.064px;position:absolute;left:595.5px;top:874.84px;font-family:'Liberation Sans', sans-serif;font-size:12px;line-height:12px;color:#c2c2c4;white-space:pre;">Propriétés du modèle de boîte</div>
<div id="t82" style="position:absolute;left:595.5px;top:895.87px;font-family:'Liberation Mono', monospace;font-size:11px;line-height:11px;color:#75bfff;white-space:pre;letter-spacing:-0.6px;">box-sizing</div>
<div id="t83" style="position:absolute;left:747.5px;top:895.87px;font-family:'Liberation Mono', monospace;font-size:11px;line-height:11px;color:#ff7de9;white-space:pre;letter-spacing:-0.6px;">content-box</div>
<div style="position:absolute;left:871px;top:522px;width:17px;height:387px;background:#38383d;"></div>
<div style="position:absolute;left:872px;top:539px;width:15px;height:278px;background:#787878;"></div>
<svg style="position:absolute;left:874px;top:526px" width="11" height="8" viewBox="0 0 11 8"><path d="M1.5 6.5l4-4 4 4" fill="none" stroke="#fff" stroke-width="2"/></svg>
<svg style="position:absolute;left:874px;top:896px" width="11" height="8" viewBox="0 0 11 8"><path d="M1.5 1.5l4 4 4-4" fill="none" stroke="#fff" stroke-width="2"/></svg>
</body></html>
